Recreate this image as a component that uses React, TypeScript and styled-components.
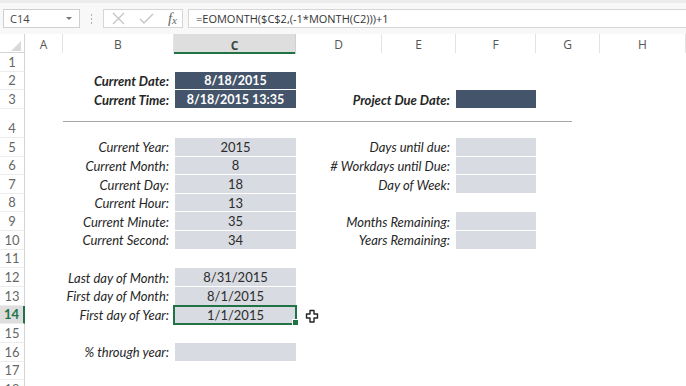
import React from "react";
import styled, { createGlobalStyle } from "styled-components";

const COLS = "25px 38px 111px 122px 86px 74px 80px 64px 1fr";
const GREEN = "#217346";

type Kind = "dark" | "light";

interface RowData {
  num: number;
  height?: number;
  label?: string;
  value?: string;
  kind?: Kind;
  bold?: boolean;
  right?: string;
  rightKind?: Kind;
  selected?: boolean;
  rule?: boolean;
}

const rows: RowData[] = [
  { num: 1 },
  { num: 2, label: "Current Date:", value: "8/18/2015", kind: "dark", bold: true },
  {
    num: 3,
    label: "Current Time:",
    value: "8/18/2015 13:35",
    kind: "dark",
    bold: true,
    right: "Project Due Date:",
    rightKind: "dark",
  },
  { num: 4, height: 29, rule: true },
  { num: 5, label: "Current Year:", value: "2015", kind: "light", right: "Days until due:", rightKind: "light" },
  { num: 6, label: "Current Month:", value: "8", kind: "light", right: "# Workdays until Due:", rightKind: "light" },
  { num: 7, label: "Current Day:", value: "18", kind: "light", right: "Day of Week:", rightKind: "light" },
  { num: 8, label: "Current Hour:", value: "13", kind: "light" },
  { num: 9, label: "Current Minute:", value: "35", kind: "light", right: "Months Remaining:", rightKind: "light" },
  { num: 10, label: "Current Second:", value: "34", kind: "light", right: "Years Remaining:", rightKind: "light" },
  { num: 11 },
  { num: 12, label: "Last day of Month:", value: "8/31/2015", kind: "light" },
  { num: 13, label: "First day of Month:", value: "8/1/2015", kind: "light" },
  { num: 14, label: "First day of Year:", value: "1/1/2015", kind: "light", selected: true },
  { num: 15 },
  { num: 16, label: "% through year:", value: "", kind: "light" },
  { num: 17 },
  { num: 18 },
];

const columns = ["A", "B", "C", "D", "E", "F", "G", "H"];

export default function App() {
  return (
    <>
      <GlobalStyle />
      <Window>
        <FormulaBar>
          <NameBox>
            <span>C14</span>
            <Caret />
          </NameBox>
          <Grip>
            <i />
            <i />
            <i />
          </Grip>
          <IconBox>
            <svg width="13" height="13" viewBox="0 0 13 13">
              <path d="M1 1 L12 12 M12 1 L1 12" stroke="#c4c4c4" strokeWidth="1.3" fill="none" />
            </svg>
            <svg width="15" height="13" viewBox="0 0 15 13">
              <path d="M1 7 L5 11 L14 2" stroke="#c4c4c4" strokeWidth="1.4" fill="none" />
            </svg>
            <Fx>
              f<sub>x</sub>
            </Fx>
          </IconBox>
          <FormulaInput>=EOMONTH($C$2,(-1*MONTH(C2)))+1</FormulaInput>
        </FormulaBar>

        <HeaderRow>
          <Corner />
          {columns.map((c) => (
            <ColHead key={c} $active={c === "C"}>
              {c}
            </ColHead>
          ))}
        </HeaderRow>

        {rows.map((r) => (
          <Row key={r.num} $h={r.height ?? 18.65}>
            <RowHead $active={r.selected}>{r.num}</RowHead>
            {r.rule && <Rule />}
            {r.label && <Label $bold={r.bold}>{r.label}</Label>}
            {r.kind && (
              <Value $kind={r.kind} $selected={r.selected}>
                {r.value}
                {r.selected && (
                  <Pointer width="14" height="15" viewBox="0 0 14 15">
                    <path
                      d="M5 1.5 H9 V5 H12.5 V9 H9 V13 H5 V9 H1.5 V5 H5 Z"
                      fill="#fff"
                      stroke="#222"
                      strokeWidth="1.4"
                      strokeLinejoin="round"
                    />
                  </Pointer>
                )}
              </Value>
            )}
            {r.right && <RightLabel $bold={r.rightKind === "dark"}>{r.right}</RightLabel>}
            {r.rightKind && <RightValue $kind={r.rightKind} />}
          </Row>
        ))}
      </Window>
    </>
  );
}

const GlobalStyle = createGlobalStyle`
  html, body {
    margin: 0;
    padding: 0;
    background: #fff;
    overflow: hidden;
  }
`;

const Window = styled.div`
  width: 686px;
  height: 386px;
  overflow: hidden;
  background: #fff;
  font-family: Lato, "Open Sans", sans-serif;
  color: #262626;
`;

const FormulaBar = styled.div`
  height: 34px;
  display: flex;
  align-items: center;
  padding: 0 0 0 3px;
  background: #f8f8f8;
  border-top: 3px solid #ececec;
  box-sizing: border-box;
`;

const NameBox = styled.div`
  width: 77px;
  height: 19px;
  box-sizing: border-box;
  display: flex;
  align-items: center;
  justify-content: space-between;
  padding: 0 7px 0 6px;
  background: #fff;
  border: 1px solid #cfcfcf;
  font-family: "Open Sans", sans-serif;
  font-size: 11px;
  color: #444;
`;

const Caret = styled.span`
  width: 0;
  height: 0;
  border-left: 3px solid transparent;
  border-right: 3px solid transparent;
  border-top: 3px solid #777;
`;

const Grip = styled.div`
  width: 23px;
  display: flex;
  flex-direction: column;
  align-items: center;
  gap: 2px;
  & i {
    width: 1px;
    height: 2px;
    background: #b0b0b0;
  }
`;

const IconBox = styled.div`
  width: 80px;
  height: 19px;
  box-sizing: border-box;
  display: flex;
  align-items: center;
  justify-content: space-between;
  padding: 0 5px 0 8px;
  background: #fff;
  border: 1px solid #d6d6d6;
`;

const Fx = styled.span`
  font-family: "Liberation Serif", serif;
  font-style: italic;
  font-size: 15px;
  color: #666;
  line-height: 1;
  & sub {
    font-size: 11px;
    vertical-align: -1px;
  }
`;

const FormulaInput = styled.div`
  flex: 1;
  margin-left: 5px;
  height: 19px;
  box-sizing: border-box;
  display: flex;
  align-items: center;
  padding-left: 7px;
  background: #fff;
  border: 1px solid #d6d6d6;
  border-right: none;
  font-family: "Open Sans", sans-serif;
  font-size: 11px;
  color: #333;
`;

const HeaderRow = styled.div`
  display: grid;
  grid-template-columns: ${COLS};
  height: 19px;
  background: #fff;
  border-bottom: 1px solid #d4d4d4;
  box-sizing: border-box;
`;

const Corner = styled.div`
  position: relative;
  border-right: 1px solid #d4d4d4;
  &::after {
    content: "";
    position: absolute;
    right: 3px;
    bottom: 2px;
    border-left: 10px solid transparent;
    border-bottom: 10px solid #d9d9d9;
  }
`;

const ColHead = styled.div<{ $active?: boolean }>`
  display: flex;
  align-items: center;
  justify-content: center;
  font-family: "Open Sans", sans-serif;
  font-size: 12px;
  color: ${(p) => (p.$active ? "#3a4a40" : "#555")};
  font-weight: ${(p) => (p.$active ? 700 : 400)};
  background: ${(p) => (p.$active ? "#dedede" : "#fff")};
  border-right: 1px solid ${(p) => (p.$active ? "#d0d0d0" : "#e3e3e3")};
  box-shadow: ${(p) => (p.$active ? `inset 0 -2px 0 ${GREEN}` : "none")};
  margin-bottom: ${(p) => (p.$active ? "-1px" : "0")};
  padding-top: 2px;
`;

const Row = styled.div<{ $h: number }>`
  display: grid;
  grid-template-columns: ${COLS};
  height: ${(p) => p.$h}px;
  font-size: 13px;
`;

const RowHead = styled.div<{ $active?: boolean }>`
  grid-column: 1;
  display: flex;
  align-items: flex-end;
  justify-content: center;
  padding-bottom: 1px;
  box-sizing: border-box;
  font-size: 13px;
  color: ${(p) => (p.$active ? GREEN : "#666")};
  font-weight: ${(p) => (p.$active ? 700 : 400)};
  background: ${(p) => (p.$active ? "#dedede" : "#fff")};
  border-bottom: 1px solid #ececec;
  border-right: ${(p) => (p.$active ? `2px solid ${GREEN}` : "1px solid #d4d4d4")};
`;

const Rule = styled.div`
  grid-column: 3 / 9;
  align-self: start;
  margin: 12px 28px 0 0;
  height: 1px;
  background: #a6a6a6;
`;

const Label = styled.div<{ $bold?: boolean }>`
  grid-column: 2 / 4;
  display: flex;
  align-items: center;
  justify-content: flex-end;
  padding-right: 5px;
  font-style: italic;
  font-weight: ${(p) => (p.$bold ? 700 : 400)};
  white-space: nowrap;
`;

const RightLabel = styled(Label)`
  grid-column: 5 / 7;
  padding-right: 6px;
`;

const fill = (k: Kind) => (k === "dark" ? "#44546a" : "#d8dbe1");

const Value = styled.div<{ $kind: Kind; $selected?: boolean }>`
  grid-column: 4;
  position: relative;
  display: flex;
  align-items: center;
  justify-content: center;
  background: ${(p) => fill(p.$kind)};
  border-bottom: 1px solid #fff;
  border-left: 1px solid #fff;
  color: ${(p) => (p.$kind === "dark" ? "#fff" : "#2c2c2c")};
  font-weight: ${(p) => (p.$kind === "dark" ? 700 : 400)};
  font-size: ${(p) => (p.$kind === "dark" ? "12.5px" : "13px")};
  white-space: nowrap;
  outline: ${(p) => (p.$selected ? `2px solid ${GREEN}` : "none")};
  outline-offset: -1px;
  ${(p) =>
    p.$selected &&
    `
    &::after {
      content: "";
      position: absolute;
      right: -3px;
      bottom: -3px;
      width: 5px;
      height: 5px;
      background: ${GREEN};
      border: 1px solid #fff;
    }
  `}
`;

const RightValue = styled.div<{ $kind: Kind }>`
  grid-column: 7;
  background: ${(p) => fill(p.$kind)};
  border-bottom: 1px solid #fff;
`;

const Pointer = styled.svg`
  position: absolute;
  right: -23px;
  top: 3px;
`;
